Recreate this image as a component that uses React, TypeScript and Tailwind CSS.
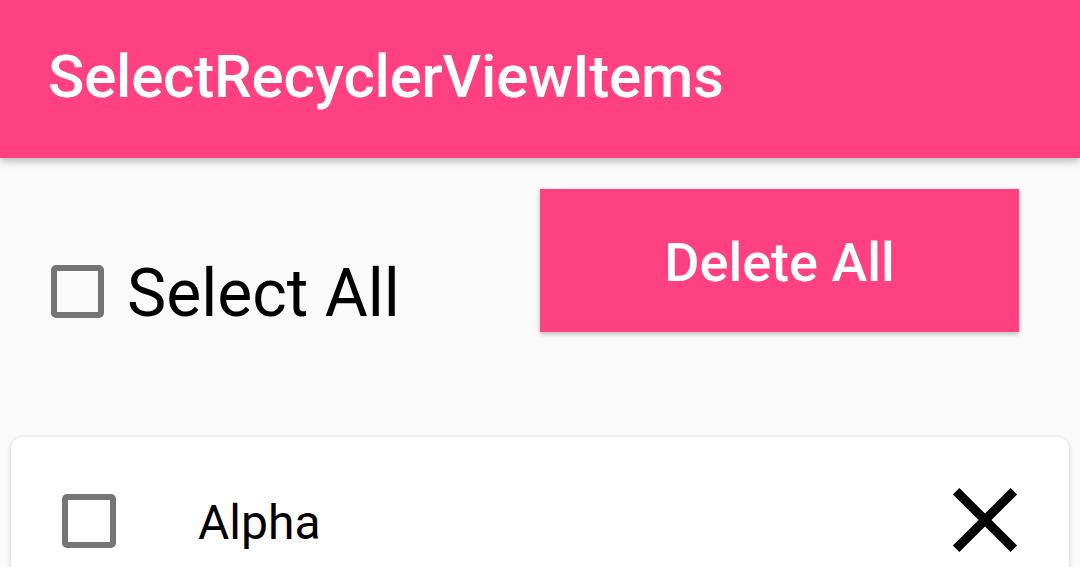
import React from "react";

function Box({ size }: { size: number }) {
  return (
    <div
      className="shrink-0 rounded-[5px] border-[6px] border-[#757575] bg-transparent"
      style={{ width: size, height: size }}
    />
  );
}

export default function App() {
  return (
    <div
      className="relative h-[567px] w-[1080px] overflow-hidden bg-[#fafafa]"
      style={{ fontFamily: "Roboto, 'Liberation Sans', sans-serif" }}
    >
      <div className="relative z-10 flex h-[158px] items-center bg-[#ff4081] pl-[48px] shadow-[0_3px_8px_rgba(0,0,0,0.28)]">
        <span className="pb-[4px] text-[60px] font-medium leading-[60px] tracking-[-0.2px] text-white">
          SelectRecyclerViewItems
        </span>
      </div>

      <div className="flex">
        <div className="flex flex-1 items-start pl-[51px] pt-[103px]">
          <div className="mt-[4px]">
            <Box size={53} />
          </div>
          <span className="ml-[23px] text-[66px] leading-[66px] text-black">Select All</span>
        </div>
        <div className="mr-[61px] mt-[31px] flex h-[143px] w-[479px] items-center justify-center bg-[#ff4081] shadow-[0_2px_5px_rgba(0,0,0,0.26)]">
          <span className="pt-[4px] text-[54px] font-medium leading-[54px] text-white">Delete All</span>
        </div>
      </div>

      <div className="mx-[11px] mt-[105px] h-[200px] rounded-[12px] bg-white pt-[57px] shadow-[0_1px_4px_rgba(0,0,0,0.22)]">
        <div className="flex h-[54px] items-center pl-[51px] pr-[29px]">
          <Box size={54} />
          <span className="ml-[82px] pt-[3px] text-[48px] leading-[48px] text-black">Alpha</span>
          <div className="flex-1" />
          <svg width="110" height="110" viewBox="0 0 24 24" className="relative -top-[1px] -my-[28px] shrink-0">
            <path
              fill="#000"
              d="M19 6.41L17.59 5 12 10.59 6.41 5 5 6.41 10.59 12 5 17.59 6.41 19 12 13.41 17.59 19 19 17.59 13.41 12z"
            />
          </svg>
        </div>
      </div>
    </div>
  );
}
